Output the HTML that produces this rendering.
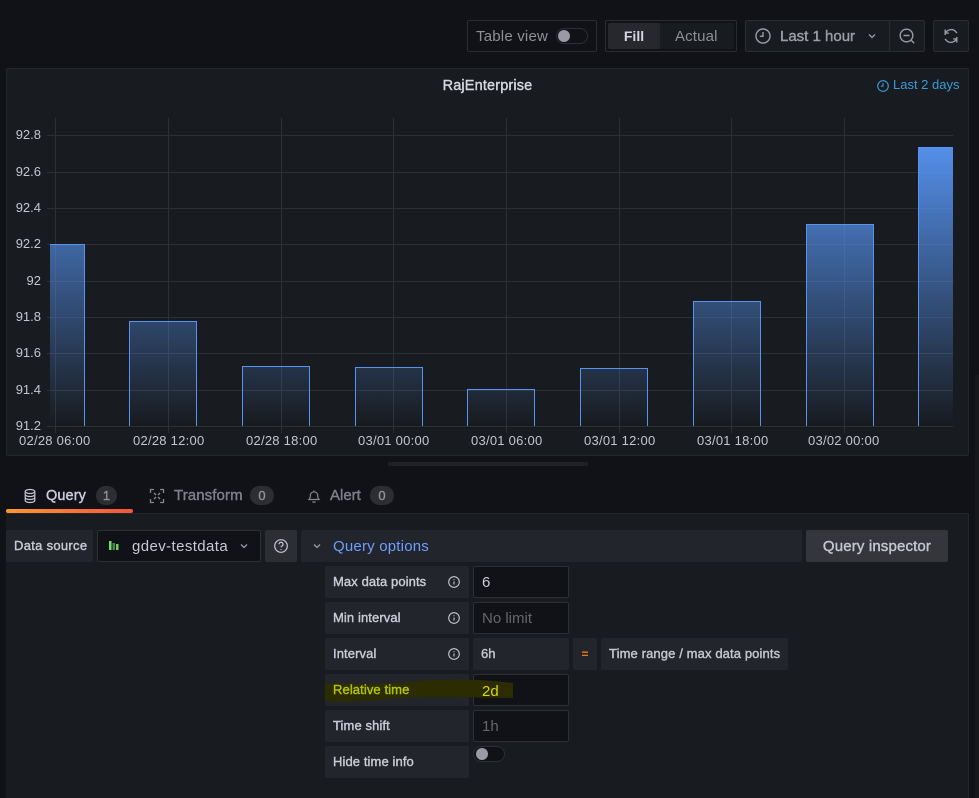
<!DOCTYPE html>
<html>
<head>
<meta charset="utf-8">
<style>
html,body{margin:0;padding:0;background:#111217;}
body{width:979px;height:798px;position:relative;overflow:hidden;font-family:"Liberation Sans",sans-serif;font-size:14px;color:#ccccdc;}
.a{position:absolute;box-sizing:border-box;white-space:nowrap;}
.m{-webkit-text-stroke:.4px currentColor;}
.lbl{background:#22252b;border-radius:2px;font-size:13px;letter-spacing:.1px;-webkit-text-stroke:.4px currentColor;color:#c8cad6;line-height:32px;padding-left:8px;height:32px;left:325px;width:144px;}
.inp{background:#111217;border:1px solid #2d2f34;border-radius:2px;left:473px;width:96px;height:32px;line-height:32px;padding-left:8px;font-size:15px;color:#ccccdc;}
.ph{color:#64666c;}
.tick{font-size:13px;color:#c4c6cf;}
.xt{letter-spacing:.25px;}
.info{position:absolute;left:447px;}
.box{border:1px solid #2a2c31;border-radius:2px;background:#16181d;}
.badge{background:#2c2e33;border-radius:10px;height:19px;line-height:19px;text-align:center;font-size:13px;color:#8e9096;-webkit-text-stroke:.4px currentColor;}
</style>
</head>
<body>
<!-- toolbar -->
<div class="a box" style="left:467px;top:20px;width:130px;height:32px;background:#111217;"></div>
<div class="a" style="left:476px;top:28px;color:#8e9096;font-size:15px;letter-spacing:.2px;">Table view</div>
<div class="a" style="left:556px;top:28px;width:32px;height:16px;border:1px solid #2d2f34;border-radius:8px;background:#111217;"></div>
<div class="a" style="left:558px;top:30px;width:12px;height:12px;border-radius:50%;background:#9a9aa5;"></div>

<div class="a box" style="left:605px;top:20px;width:132px;height:32px;background:#111217;"></div>
<div class="a" style="left:608px;top:23px;width:126px;height:26px;background:#181b1f;border-radius:2px;"></div>
<div class="a" style="left:608px;top:23px;width:52px;height:26px;background:#26282d;border-radius:2px;text-align:center;line-height:26px;font-weight:700;color:#d5d6de;">Fill</div>
<div class="a" style="left:675px;top:28px;color:#8e9096;font-size:15px;letter-spacing:.15px;">Actual</div>

<div class="a box" style="left:745px;top:20px;width:180px;height:32px;background:#181b1f;"></div>
<div class="a" style="left:889px;top:20px;width:1px;height:32px;background:#2a2c31;"></div>
<svg class="a" style="left:754px;top:27px" width="18" height="18" viewBox="0 0 18 18" fill="none" stroke="#9a9ba3" stroke-width="1.4"><circle cx="9" cy="9" r="7"/><path d="M9 5v4.300H5.800"/></svg>
<div class="a m" style="left:780px;top:28px;color:#9c9da5;font-size:15px;">Last 1 hour</div>
<svg class="a" style="left:867px;top:31px" width="10" height="10" viewBox="0 0 10 10" fill="none" stroke="#9a9ba3" stroke-width="1.3"><path d="M2 3.500l3 3 3-3"/></svg>
<svg class="a" style="left:898px;top:27px" width="18" height="18" viewBox="0 0 18 18" fill="none" stroke="#9a9ba3" stroke-width="1.4"><circle cx="8.500" cy="8.500" r="6.300"/><path d="M5.500 8.500h6M13 13l3.200 3.200"/></svg>
<div class="a box" style="left:933px;top:20px;width:36px;height:32px;background:#181b1f;"></div>
<svg class="a" style="left:942px;top:27px" width="18" height="18" viewBox="0 0 18 18" fill="none" stroke="#9a9ba3" stroke-width="1.4"><path d="M3 8a6.200 6.200 0 0 1 11-3l1 1M3.200 2.500v3.600h3.600M15 10a6.200 6.200 0 0 1-11 3l-1-1M14.800 15.500v-3.600h-3.600"/></svg>

<!-- panel -->
<div class="a" style="left:6px;top:68px;width:963px;height:388px;background:#181b1f;border:1px solid #24262b;border-radius:2px;"></div>
<div class="a m" style="left:6px;top:78px;width:963px;text-align:center;color:#d5d6de;font-size:14.500px;letter-spacing:.15px;line-height:17px;">RajEnterprise</div>
<svg class="a" style="left:876px;top:79px" width="14" height="14" viewBox="0 0 14 14" fill="none" stroke="#3a9bd8" stroke-width="1.100"><circle cx="7" cy="7" r="5.300"/><path d="M7 4v3.200H4.800"/></svg>
<div class="a" style="left:893px;top:77px;color:#3a9bd8;font-size:13px;line-height:16px;">Last 2 days</div>

<svg class="a" style="left:0;top:0" width="979" height="470" viewBox="0 0 979 470">
<defs>
<linearGradient id="g" gradientUnits="userSpaceOnUse" x1="0" y1="147" x2="0" y2="426">
<stop offset="0" stop-color="#5794f2" stop-opacity=".96"/>
<stop offset="1" stop-color="#5794f2" stop-opacity="0"/>
</linearGradient>
</defs>
<g stroke="#2d2f34" stroke-width="1" shape-rendering="crispEdges">
<path d="M47 135.500H953M47 172.500H953M47 208.500H953M47 244.500H953M47 281.500H953M47 317.500H953M47 353.500H953M47 390.500H953M47 426.500H953"/>
<path d="M55.500 118V433M168.500 118V433M281.500 118V433M393.500 118V433M506.500 118V433M619.500 118V433M731.500 118V433M844.500 118V433"/>
</g>
<g fill="url(#g)" shape-rendering="crispEdges">
<rect x="50" y="244" width="35" height="182"/>
<rect x="129" y="321" width="68" height="105"/>
<rect x="242" y="366" width="68" height="60"/>
<rect x="355" y="367" width="68" height="59"/>
<rect x="467" y="389" width="68" height="37"/>
<rect x="580" y="368" width="68" height="58"/>
<rect x="693" y="301" width="68" height="125"/>
<rect x="806" y="224" width="68" height="202"/>
<rect x="918" y="147" width="35" height="279"/>
</g>
<g fill="none" stroke="#5794f2" stroke-width="1" shape-rendering="crispEdges">
<path d="M50 244.500H84.500V426"/>
<path d="M129.500 426V321.500H196.500V426"/>
<path d="M242.500 426V366.500H309.500V426"/>
<path d="M355.500 426V367.500H422.500V426"/>
<path d="M467.500 426V389.500H534.500V426"/>
<path d="M580.500 426V368.500H647.500V426"/>
<path d="M693.500 426V301.500H760.500V426"/>
<path d="M806.500 426V224.500H873.500V426"/>
<path d="M918.500 426V147.500H953"/>
</g>
</svg>

<div class="a tick" style="left:0;width:41px;text-align:right;top:127px;">92.8</div>
<div class="a tick" style="left:0;width:41px;text-align:right;top:164px;">92.6</div>
<div class="a tick" style="left:0;width:41px;text-align:right;top:200px;">92.4</div>
<div class="a tick" style="left:0;width:41px;text-align:right;top:236px;">92.2</div>
<div class="a tick" style="left:0;width:41px;text-align:right;top:273px;">92</div>
<div class="a tick" style="left:0;width:41px;text-align:right;top:309px;">91.8</div>
<div class="a tick" style="left:0;width:41px;text-align:right;top:345px;">91.6</div>
<div class="a tick" style="left:0;width:41px;text-align:right;top:382px;">91.4</div>
<div class="a tick" style="left:0;width:41px;text-align:right;top:418px;">91.2</div>

<div class="a tick xt" style="left:19px;top:433px;">02/28 06:00</div>
<div class="a tick xt" style="left:133px;top:433px;">02/28 12:00</div>
<div class="a tick xt" style="left:246px;top:433px;">02/28 18:00</div>
<div class="a tick xt" style="left:358px;top:433px;">03/01 00:00</div>
<div class="a tick xt" style="left:471px;top:433px;">03/01 06:00</div>
<div class="a tick xt" style="left:584px;top:433px;">03/01 12:00</div>
<div class="a tick xt" style="left:697px;top:433px;">03/01 18:00</div>
<div class="a tick xt" style="left:808px;top:433px;">03/02 00:00</div>

<!-- splitter -->
<div class="a" style="left:388px;top:462px;width:200px;height:4px;background:#1f2126;border-radius:2px;"></div>
<!-- faint scroll track -->
<div class="a" style="left:975px;top:375px;width:4px;height:423px;background:#16181c;"></div>

<!-- tabs -->
<svg class="a" style="left:22px;top:488px" width="16" height="16" viewBox="0 0 16 16" fill="none" stroke="#c4c6cf" stroke-width="1.200"><ellipse cx="8" cy="3.500" rx="4.800" ry="2"/><path d="M3.200 3.500v9c0 1.100 2.100 2 4.800 2s4.800-.9 4.800-2v-9M3.200 6.500c0 1.100 2.100 2 4.800 2s4.800-.9 4.800-2M3.200 9.500c0 1.100 2.100 2 4.800 2s4.800-.9 4.800-2"/></svg>
<div class="a m" style="left:46px;top:488px;color:#ccccdc;font-size:14.500px;letter-spacing:.1px;">Query</div>
<div class="a badge" style="left:96px;top:486px;width:21px;">1</div>
<div class="a" style="left:6px;top:509px;width:127px;height:4px;border-radius:2px;background:linear-gradient(90deg,#ff9830,#f2553d);"></div>
<svg class="a" style="left:149px;top:488px" width="16" height="16" viewBox="0 0 16 16" fill="none" stroke="#85878d" stroke-width="1.300"><path d="M1.500 5V1.500H5M11 1.500h3.500V5M14.500 11v3.500H11M5 14.500H1.500V11M5 5l2 2M11 5L9 7M5 11l2-2M11 11L9 9"/></svg>
<div class="a m" style="left:174px;top:487px;color:#7e8087;font-size:15px;letter-spacing:.1px;">Transform</div>
<div class="a badge" style="left:250px;top:486px;width:24px;">0</div>
<svg class="a" style="left:306px;top:488px" width="16" height="16" viewBox="0 0 16 16" fill="none" stroke="#85878d" stroke-width="1.200"><path d="M3 11.500c1-1 1.300-2 1.300-4a3.700 3.700 0 0 1 7.400 0c0 2 .3 3 1.300 4zM6.500 13.500c.4 1 2.600 1 3 0M8 3.800V2.500"/></svg>
<div class="a m" style="left:330px;top:487px;color:#7e8087;font-size:15px;">Alert</div>
<div class="a badge" style="left:370px;top:486px;width:24px;">0</div>

<!-- query area -->
<div class="a" style="left:6px;top:513px;width:963px;height:285px;background:#181b1f;border-top:1px solid #24262b;border-right:1px solid #24262b;"></div>
<div class="a lbl" style="left:6px;top:530px;width:87px;letter-spacing:.3px;">Data source</div>
<div class="a" style="left:97px;top:530px;width:164px;height:32px;background:#111217;border:1px solid #2d2f34;border-radius:2px;"></div>
<svg class="a" style="left:108px;top:540px" width="12" height="12" viewBox="0 0 12 12"><rect x="1" y="1" width="2.500" height="9" fill="#73e069"/><rect x="4.500" y="3" width="2.500" height="7" fill="#3d8f3a"/><rect x="8" y="4" width="2.500" height="6" fill="#6ccf5f"/></svg>
<div class="a" style="left:132px;top:538px;font-size:15px;letter-spacing:.4px;color:#c8c9d3;">gdev-testdata</div>
<svg class="a" style="left:239px;top:541px" width="10" height="10" viewBox="0 0 10 10" fill="none" stroke="#9a9ba3" stroke-width="1.300"><path d="M2 3.500l3 3 3-3"/></svg>
<div class="a" style="left:265px;top:530px;width:32px;height:32px;background:#2c2e33;border-radius:2px;"></div>
<svg class="a" style="left:273px;top:538px" width="16" height="16" viewBox="0 0 16 16" fill="none" stroke="#c4c6cf" stroke-width="1.200"><circle cx="8" cy="8" r="6.300"/><path d="M6 6.300a2 2 0 1 1 2.800 1.800c-.6.300-.8.600-.8 1.200"/><path d="M8 11v.9"/></svg>

<div class="a" style="left:301px;top:530px;width:501px;height:32px;background:#22252b;border-radius:2px;"></div>
<svg class="a" style="left:312px;top:541px" width="10" height="10" viewBox="0 0 10 10" fill="none" stroke="#9a9ba3" stroke-width="1.300"><path d="M2 3.500l3 3 3-3"/></svg>
<div class="a" style="left:333px;top:538px;color:#6e9fff;font-size:15px;letter-spacing:.2px;">Query options</div>
<div class="a m" style="left:806px;top:530px;width:142px;height:32px;background:#34363c;border-radius:2px;text-align:center;line-height:33px;color:#c4c6cf;font-size:15px;letter-spacing:.15px;">Query inspector</div>

<div class="a lbl" style="top:566px;">Max data points</div>
<div class="a inp" style="top:566px;">6</div>
<div class="a lbl" style="top:602px;">Min interval</div>
<div class="a inp ph" style="top:602px;">No limit</div>
<div class="a lbl" style="top:638px;">Interval</div>
<div class="a m" style="left:473px;top:638px;width:96px;height:32px;background:#22252b;border-radius:2px;font-size:13px;line-height:32px;padding-left:8px;color:#c4c6cf;">6h</div>
<div class="a" style="left:573px;top:638px;width:24px;height:32px;background:#22252b;border-radius:2px;text-align:center;font-size:12px;font-weight:700;line-height:32px;color:#eb7b18;">=</div>
<div class="a m" style="left:601px;top:638px;width:187px;height:32px;background:#22252b;border-radius:2px;font-size:13px;letter-spacing:.12px;line-height:32px;padding-left:8px;color:#c4c6cf;">Time range / max data points</div>
<div class="a lbl" style="top:674px;"></div>
<div class="a inp" style="top:674px;"></div>
<div class="a lbl" style="top:710px;">Time shift</div>
<div class="a inp ph" style="top:710px;">1h</div>
<div class="a lbl" style="top:746px;">Hide time info</div>
<div class="a" style="left:473px;top:746px;width:32px;height:16px;border:1px solid #2d2f34;border-radius:8px;background:#111217;"></div>
<div class="a" style="left:476px;top:748px;width:12px;height:12px;border-radius:50%;background:#9a9aa5;"></div>

<svg class="info" style="top:575px" width="14" height="14" viewBox="0 0 14 14" fill="none" stroke="#c4c6cf" stroke-width="1.100"><circle cx="7" cy="7" r="5.300"/><path d="M7 6.500v3M7 4.200v1"/></svg>
<svg class="info" style="top:611px" width="14" height="14" viewBox="0 0 14 14" fill="none" stroke="#c4c6cf" stroke-width="1.100"><circle cx="7" cy="7" r="5.300"/><path d="M7 6.500v3M7 4.200v1"/></svg>
<svg class="info" style="top:647px" width="14" height="14" viewBox="0 0 14 14" fill="none" stroke="#c4c6cf" stroke-width="1.100"><circle cx="7" cy="7" r="5.300"/><path d="M7 6.500v3M7 4.200v1"/></svg>

<!-- yellow highlighter -->
<svg class="a" style="left:320px;top:670px" width="200" height="36" viewBox="0 0 200 36"><path d="M5 13C40 14 70 14 100 11C130 9 160 9 193 13L193 28C160 28 130 26 100 27C70 28 40 33 5 31Z" fill="#2b2d00"/></svg>
<div class="a" style="left:333px;top:674px;font-size:13px;letter-spacing:.1px;-webkit-text-stroke:.4px currentColor;line-height:32px;color:#b4c400;">Relative time</div>
<div class="a" style="left:482px;top:675px;font-size:15px;line-height:33px;color:#d8d800;">2d</div>
</body>
</html>
